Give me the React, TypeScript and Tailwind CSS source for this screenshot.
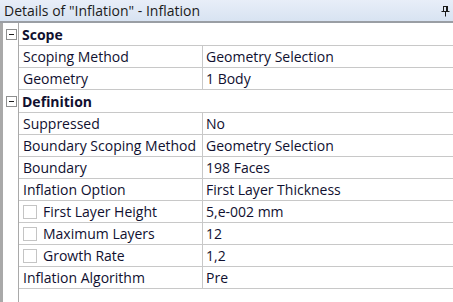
import { Fragment } from "react";

type Prop = {
  name: string;
  value: string;
  check?: boolean;
};

type Section = {
  title: string;
  props: Prop[];
};

const sections: Section[] = [
  {
    title: "Scope",
    props: [
      { name: "Scoping Method", value: "Geometry Selection" },
      { name: "Geometry", value: "1 Body" },
    ],
  },
  {
    title: "Definition",
    props: [
      { name: "Suppressed", value: "No" },
      { name: "Boundary Scoping Method", value: "Geometry Selection" },
      { name: "Boundary", value: "198 Faces" },
      { name: "Inflation Option", value: "First Layer Thickness" },
      { name: "First Layer Height", value: "5,e-002 mm", check: true },
      { name: "Maximum Layers", value: "12", check: true },
      { name: "Growth Rate", value: "1,2", check: true },
      { name: "Inflation Algorithm", value: "Pre" },
    ],
  },
];

const PinIcon = () => (
  <svg width="9" height="12" viewBox="0 0 9 12" className="block">
    <path d="M2 1.5h5M2.5 1.5v5M6.5 1.5v5M0.5 6.5h8M4.5 6.5v5" stroke="#1a1a1a" strokeWidth="1" fill="none" />
    <path d="M5.5 2v4" stroke="#1a1a1a" strokeWidth="1" />
  </svg>
);

const Minus = () => (
  <div className="w-[11px] h-[11px] border border-[#8e8f8f] bg-white flex items-center justify-center">
    <div className="w-[5px] h-px bg-[#1e1e1e]" />
  </div>
);

const App = () => {
  return (
    <div
      className="w-[453px] h-[302px] bg-white flex flex-col overflow-hidden text-[#101030]"
      style={{ fontFamily: '"Open Sans", "Noto Sans", sans-serif' }}
    >
      <div className="h-[23px] flex items-center justify-between pl-[4px] pr-[3px] bg-gradient-to-b from-[#e8eef8] to-[#d8e3f2] border-b-2 border-[#9a9ea4] text-[14px] text-[#1b1b1b] shrink-0">
        <span>Details of "Inflation" - Inflation</span>
        <PinIcon />
      </div>
      <div className="flex-1 flex flex-col border-l-[3px] border-[#a9a9a9]">
        {sections.map((s) => (
          <Fragment key={s.title}>
            <div className="flex h-[23px]">
              <div className="w-[16px] border-r border-[#a9a9a9] flex items-center justify-center pl-[1px]">
                <Minus />
              </div>
              <div className="flex-1 border-b border-[#c8c8c8] flex items-center pl-[3px] font-bold text-[14px]">
                {s.title}
              </div>
            </div>
            {s.props.map((p) => (
              <div key={p.name} className="flex h-[22px]">
                <div className="w-[16px] border-r border-[#a9a9a9]" />
                <div className="w-[184px] border-b border-r border-[#c8c8c8] flex items-center pl-[4px] gap-[6px] text-[14px]">
                  {p.check && <div className="w-[14px] h-[14px] border border-[#c4c4c4] bg-white" />}
                  <span>{p.name}</span>
                </div>
                <div className="flex-1 border-b border-[#c8c8c8] flex items-center pl-[3px] text-[14px]">
                  {p.value}
                </div>
              </div>
            ))}
          </Fragment>
        ))}
        <div className="flex-1 flex">
          <div className="w-[16px] border-r border-[#a9a9a9]" />
        </div>
      </div>
    </div>
  );
};

export default App;
